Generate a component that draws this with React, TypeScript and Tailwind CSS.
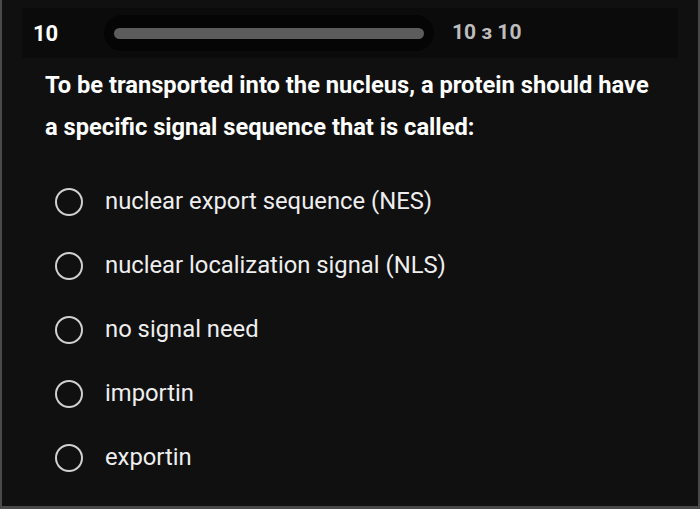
import React from "react";

const options = [
  "nuclear export sequence (NES)",
  "nuclear localization signal (NLS)",
  "no signal need",
  "importin",
  "exportin",
];

export default function App() {
  return (
    <div
      className="w-[700px] h-[509px] bg-[#101010] border-l-2 border-r-2 border-b-[3px] border-[#4a4a4a] overflow-hidden"
      style={{ fontFamily: "Roboto, 'Noto Sans', sans-serif" }}
    >
      <div className="mx-[20px] mt-[8px] h-[50px] bg-[#0b0b0b] flex items-center">
        <div className="w-[60px] pl-[11px] text-[22px] font-bold text-white">10</div>
        <div className="ml-[22px] w-[330px] h-[36px] rounded-full bg-[#050505] flex items-center px-[10px]">
          <div className="w-full h-[11px] rounded-full bg-[#5c5c5c]" />
        </div>
        <div className="ml-[18px] text-[21px] font-bold text-[#bdbdbd]">10 з 10</div>
      </div>

      <div className="pl-[43px] pr-[40px] pt-[6px] text-[23.7px] font-bold leading-[42px] text-white">
        To be transported into the nucleus, a protein should have a specific signal sequence that is called:
      </div>

      <div className="mt-[40px] flex flex-col gap-[36px] pl-[53px]">
        {options.map((o) => (
          <div key={o} className="flex items-center h-[28px]">
            <div className="w-[28px] h-[28px] rounded-full border-[2.5px] border-[#d0d0d0]" />
            <div className="ml-[22px] text-[23.8px] text-[#eeeeee]">{o}</div>
          </div>
        ))}
      </div>
    </div>
  );
}
